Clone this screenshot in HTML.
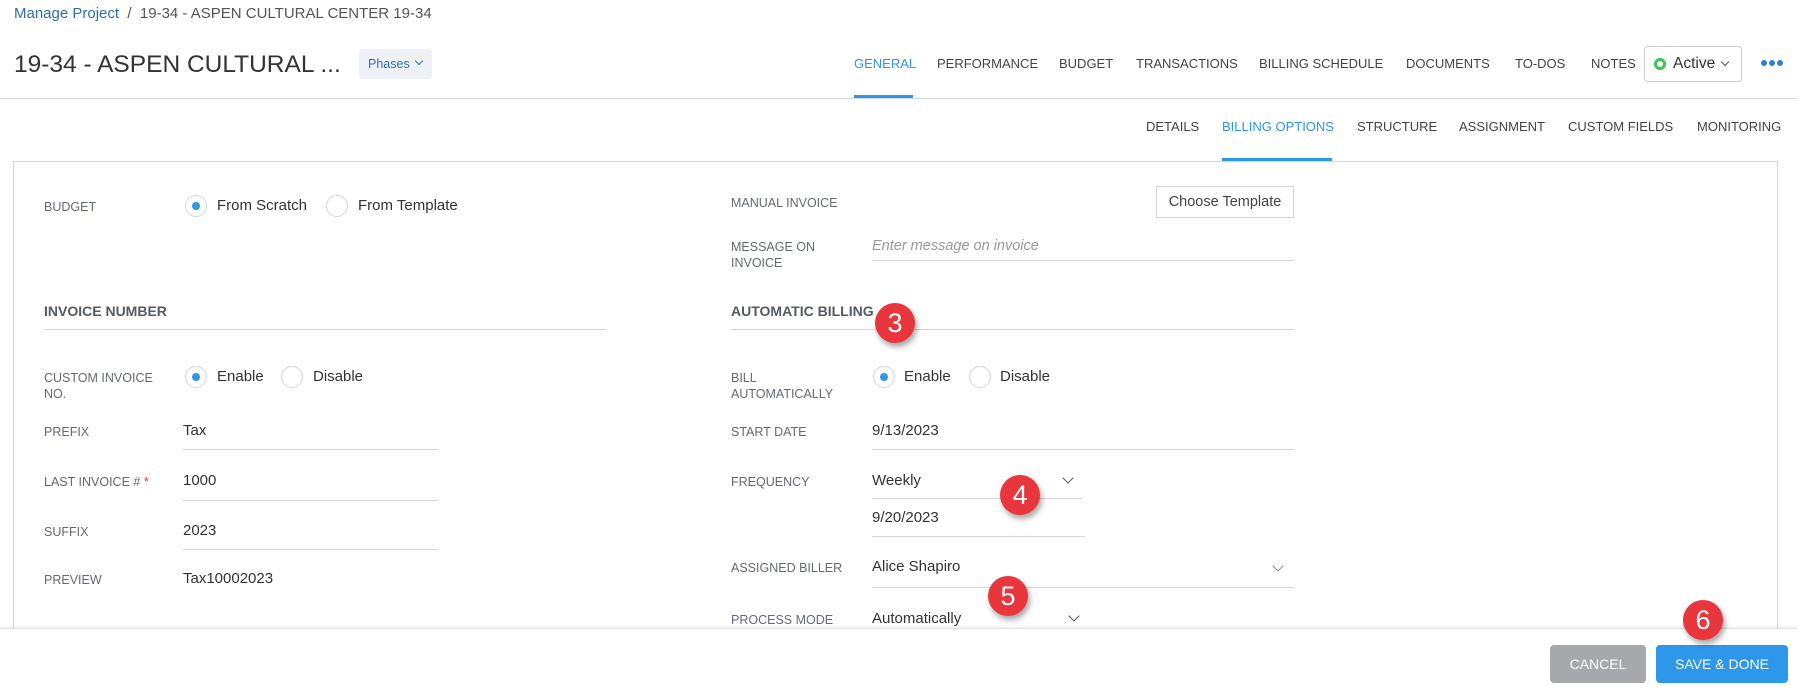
<!DOCTYPE html>
<html><head><meta charset="utf-8"><style>
*{box-sizing:border-box;margin:0;padding:0}
body{width:1797px;height:689px;overflow:hidden;background:#fff;font-family:"Liberation Sans",sans-serif;color:#333;position:relative}
.a{position:absolute;white-space:nowrap}
.tab{position:absolute;top:56px;font-size:13px;color:#444;line-height:16px}
.st{position:absolute;top:119px;font-size:13px;color:#444;line-height:16px}
.lb{position:absolute;font-size:12.5px;color:#666a73;line-height:16px}
.v{position:absolute;font-size:15px;color:#333;line-height:18px}
.ln{position:absolute;height:1px;background:#d3d8de}
.rd{position:absolute;width:22px;height:22px;border:1px solid #d3d6dc;border-radius:50%}
.rd.on::after{content:"";position:absolute;left:6px;top:6px;width:8px;height:8px;border-radius:50%;background:#2d97ea}
.h{position:absolute;font-size:14px;font-weight:bold;color:#555a63}
.bd{position:absolute;width:40px;height:40px;border-radius:50%;background:#e8363c;color:#fff;font-size:27px;text-align:center;line-height:40px;box-shadow:2px 4px 6px rgba(0,0,0,.35)}
.chev{position:absolute;width:8px;height:8px;border-right:1.5px solid #555;border-bottom:1.5px solid #555;transform:rotate(45deg)}
.dot{position:absolute;top:60px;width:6px;height:6px;border-radius:50%;background:#2d7ed8}
</style></head><body>
<div class="a" style="left:14px;top:5px;font-size:15px;color:#555"><span style="color:#2f6fb0">Manage Project</span> &nbsp;/&nbsp; 19-34 - ASPEN CULTURAL CENTER 19-34</div>
<div class="a" style="left:14px;top:51px;font-size:24.5px;color:#333">19-34 - ASPEN CULTURAL ...</div>
<div class="a" style="left:359px;top:49px;width:73px;height:30px;background:#eef2f7;border-radius:3px;font-size:12.5px;color:#2f6fb0;line-height:30px;padding-left:9px">Phases</div>
<div class="chev" style="left:416px;top:58px;width:6px;height:6px;border-color:#2f6fb0"></div>

<div class="tab" style="left:854px;color:#2d97ea">GENERAL</div>
<div class="a" style="left:854px;top:95px;width:59px;height:3px;background:#2d97ea"></div>
<div class="tab" style="left:937px">PERFORMANCE</div>
<div class="tab" style="left:1059px">BUDGET</div>
<div class="tab" style="left:1136px">TRANSACTIONS</div>
<div class="tab" style="left:1259px">BILLING SCHEDULE</div>
<div class="tab" style="left:1406px">DOCUMENTS</div>
<div class="tab" style="left:1515px">TO-DOS</div>
<div class="tab" style="left:1591px">NOTES</div>
<div class="a" style="left:1644px;top:46px;width:98px;height:36px;border:1px solid #ccd;border-radius:4px"></div>
<div class="a" style="left:1654px;top:58px;width:12px;height:12px;border:3px solid #3cc453;border-radius:50%"></div>
<div class="a" style="left:1673px;top:55px;font-size:15.5px;color:#333">Active</div>
<div class="chev" style="left:1722px;top:59px;width:6px;height:6px"></div>
<div class="dot" style="left:1761px"></div><div class="dot" style="left:1769px"></div><div class="dot" style="left:1777px"></div>
<div class="ln" style="left:0;top:98px;width:1797px"></div>

<div class="st" style="left:1146px">DETAILS</div>
<div class="st" style="left:1222px;color:#2d97ea">BILLING OPTIONS</div>
<div class="a" style="left:1222px;top:158px;width:110px;height:3px;background:#2d97ea"></div>
<div class="st" style="left:1357px">STRUCTURE</div>
<div class="st" style="left:1459px">ASSIGNMENT</div>
<div class="st" style="left:1568px">CUSTOM FIELDS</div>
<div class="st" style="left:1697px">MONITORING</div>

<div class="a" style="left:13px;top:161px;width:1765px;height:480px;border:1px solid #d3d8de"></div>

<div class="lb" style="left:44px;top:199px">BUDGET</div>
<div class="rd on" style="left:185px;top:195px"></div><div class="v" style="left:217px;top:197px">From Scratch</div>
<div class="rd" style="left:326px;top:195px"></div><div class="v" style="left:358px;top:197px">From Template</div>

<div class="h" style="left:44px;top:303px">INVOICE NUMBER</div>
<div class="ln" style="left:44px;top:329px;width:562px"></div>
<div class="lb" style="left:44px;top:370px;line-height:16px">CUSTOM INVOICE<br>NO.</div>
<div class="rd on" style="left:185px;top:366px"></div><div class="v" style="left:217px;top:368px">Enable</div>
<div class="rd" style="left:281px;top:366px"></div><div class="v" style="left:313px;top:368px">Disable</div>
<div class="lb" style="left:44px;top:424px">PREFIX</div><div class="v" style="left:183px;top:422px">Tax</div>
<div class="ln" style="left:183px;top:449px;width:255px"></div>
<div class="lb" style="left:44px;top:474px">LAST INVOICE # <span style="color:#e33">*</span></div><div class="v" style="left:183px;top:472px">1000</div>
<div class="ln" style="left:183px;top:500px;width:255px"></div>
<div class="lb" style="left:44px;top:524px">SUFFIX</div><div class="v" style="left:183px;top:522px">2023</div>
<div class="ln" style="left:183px;top:549px;width:255px"></div>
<div class="lb" style="left:44px;top:572px">PREVIEW</div><div class="v" style="left:183px;top:570px">Tax10002023</div>

<div class="lb" style="left:731px;top:195px">MANUAL INVOICE</div>
<div class="a" style="left:1156px;top:186px;width:138px;height:32px;border:1px solid #d3d8de;font-size:14.5px;color:#444;line-height:30px;text-align:center">Choose Template</div>
<div class="lb" style="left:731px;top:239px;line-height:16px">MESSAGE ON<br>INVOICE</div>
<div class="v" style="left:872px;top:237px;font-style:italic;color:#999;font-size:14.5px">Enter message on invoice</div>
<div class="ln" style="left:872px;top:260px;width:422px"></div>
<div class="h" style="left:731px;top:303px">AUTOMATIC BILLING</div>
<div class="ln" style="left:731px;top:329px;width:563px"></div>
<div class="lb" style="left:731px;top:370px;line-height:16px">BILL<br>AUTOMATICALLY</div>
<div class="rd on" style="left:873px;top:366px"></div><div class="v" style="left:904px;top:368px">Enable</div>
<div class="rd" style="left:969px;top:366px"></div><div class="v" style="left:1000px;top:368px">Disable</div>
<div class="lb" style="left:731px;top:424px">START DATE</div><div class="v" style="left:872px;top:422px">9/13/2023</div>
<div class="ln" style="left:872px;top:449px;width:422px"></div>
<div class="lb" style="left:731px;top:474px">FREQUENCY</div><div class="v" style="left:872px;top:472px">Weekly</div>
<div class="chev" style="left:1064px;top:474px"></div>
<div class="ln" style="left:872px;top:498px;width:210px"></div>
<div class="v" style="left:872px;top:509px">9/20/2023</div>
<div class="ln" style="left:872px;top:536px;width:213px"></div>
<div class="lb" style="left:731px;top:560px">ASSIGNED BILLER</div><div class="v" style="left:872px;top:558px">Alice Shapiro</div>
<div class="chev" style="left:1274px;top:562px;border-color:#888"></div>
<div class="ln" style="left:872px;top:587px;width:422px"></div>
<div class="lb" style="left:731px;top:612px">PROCESS MODE</div><div class="v" style="left:872px;top:610px">Automatically</div>
<div class="chev" style="left:1070px;top:612px"></div>

<div class="a" style="left:0;top:628px;width:1797px;height:61px;background:#fff;border-top:1px solid #e2e4e8;box-shadow:0 -2px 3px rgba(0,0,0,.05)"></div>
<div class="a" style="left:1550px;top:645px;width:96px;height:38px;background:#a6a8ac;border-radius:4px;color:#fff;font-size:14px;text-align:center;line-height:38px">CANCEL</div>
<div class="a" style="left:1656px;top:645px;width:132px;height:38px;background:#2d97ea;border-radius:4px;color:#fff;font-size:14px;text-align:center;line-height:38px">SAVE &amp; DONE</div>

<div class="bd" style="left:875px;top:303px">3</div>
<div class="bd" style="left:1000px;top:475px">4</div>
<div class="bd" style="left:988px;top:576px">5</div>
<div class="bd" style="left:1683px;top:600px">6</div>
</body></html>
